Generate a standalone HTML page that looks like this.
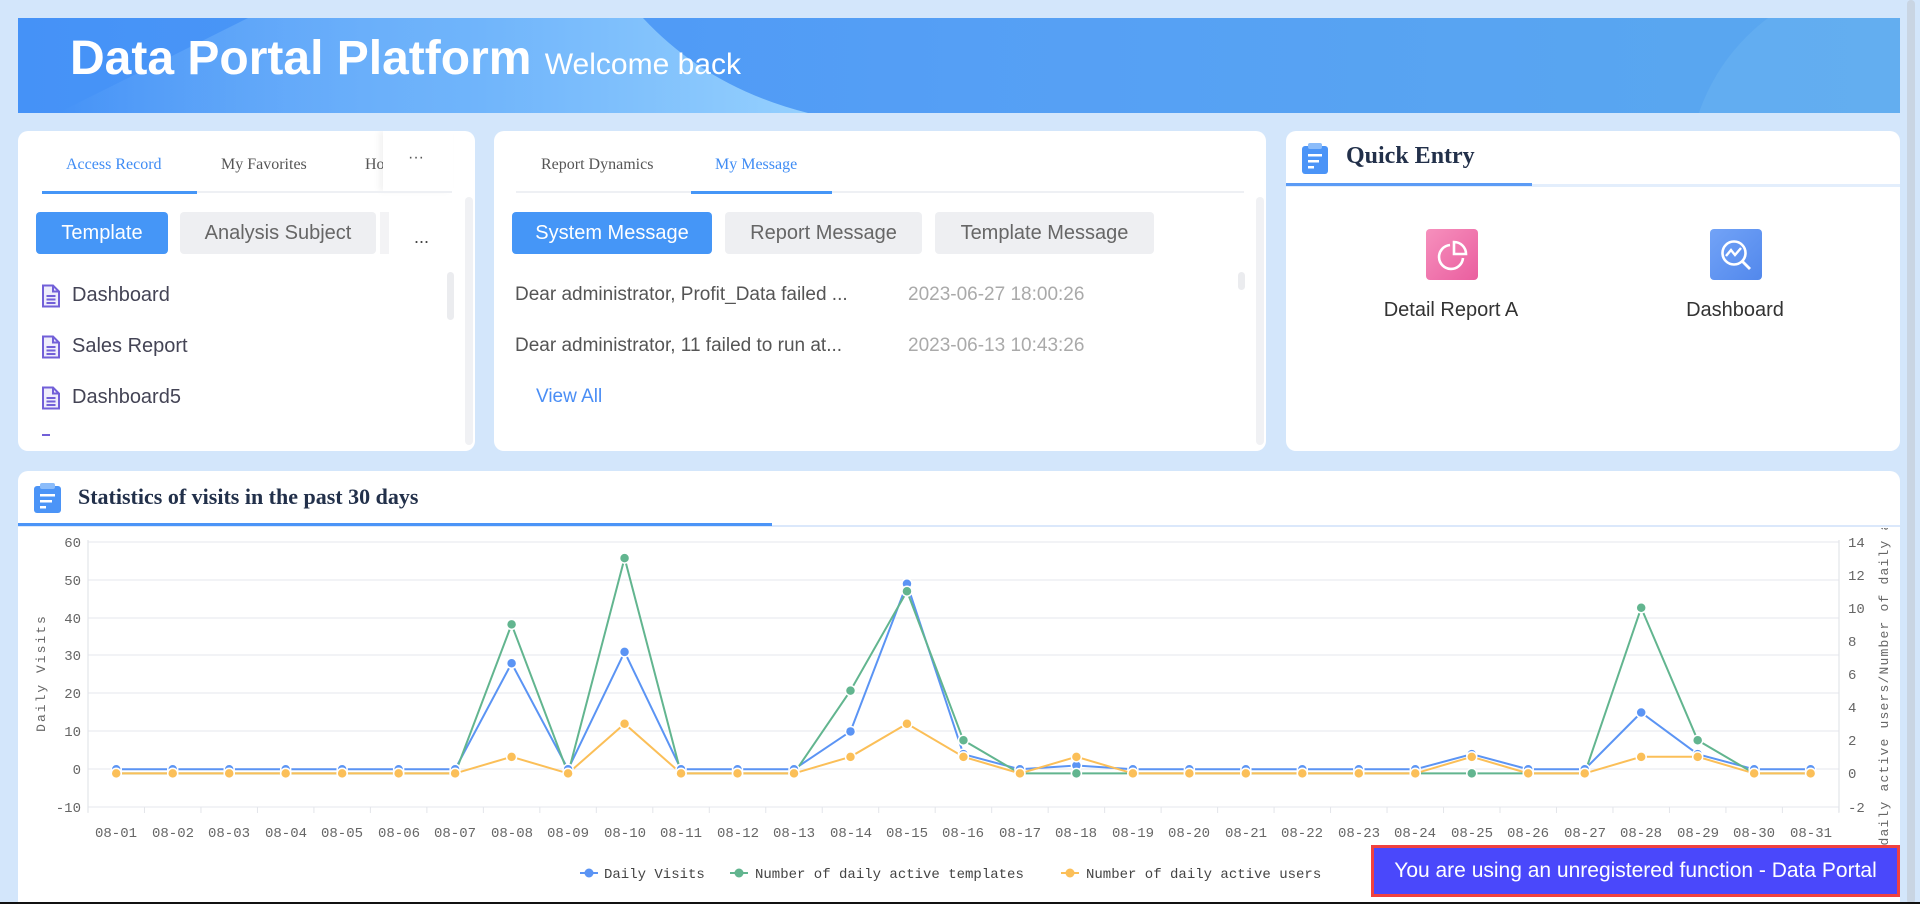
<!DOCTYPE html>
<html><head><meta charset="utf-8">
<style>
*{margin:0;padding:0;box-sizing:border-box}
html,body{width:1920px;height:904px;overflow:hidden}
body{background:#d3e6fb;position:relative;font-family:"Liberation Sans",sans-serif}
.a{position:absolute}
.card{position:absolute;background:#fff;border-radius:10px;overflow:hidden}
.serif{font-family:"Liberation Serif",serif}
.btn{position:absolute;height:42px;border-radius:4px;font-size:20px;line-height:42px;text-align:center;color:#666;background:#eeeff2}
.btn.on{background:#4596f7;color:#fff}
.li{position:absolute;left:23px;font-size:20px;color:#445;line-height:24px}
.li svg{position:absolute;left:0;top:1px}
.li span{position:absolute;left:31px;white-space:nowrap}
.msg{position:absolute;font-size:19px;color:#555;white-space:nowrap}
.dt{position:absolute;font-size:19px;color:#aaa;white-space:nowrap}
.mono{font-family:"Liberation Mono",monospace}
</style></head><body>

<div class="a" style="left:18px;top:18px;width:1882px;height:95px;overflow:hidden;background:linear-gradient(90deg,#4592f7 0%,#559ff5 50%,#5aa8ef 100%)">
<svg width="1882" height="95" style="position:absolute;left:0;top:0">
<defs><linearGradient id="lg" x1="0" x2="1" y1="0" y2="0"><stop offset="0" stop-color="#9fd4ff" stop-opacity="0"/><stop offset="0.55" stop-color="#7ec0fd" stop-opacity="0.7"/><stop offset="1" stop-color="#95d0fe" stop-opacity="1"/></linearGradient></defs>
<path d="M230 0 L625 0 Q690 70 790 95 L40 95 Z" fill="url(#lg)"/>
<circle cx="1870" cy="160" r="200" fill="#6cb3f2" opacity="0.5"/>
</svg>
<div class="a" style="left:52px;top:13px;color:#fff;font-weight:bold;font-size:48px;white-space:nowrap">Data Portal Platform <span style="font-weight:normal;font-size:30px">Welcome back</span></div>
</div>

<div class="a" style="left:1907px;top:0;width:8px;height:904px;background:#c9d5e3;border-radius:4px"></div>

<div class="card" style="left:18px;top:131px;width:457px;height:320px">
<div class="a serif" style="left:48px;top:25px;font-size:16px;color:#3f8cf4">Access Record</div>
<div class="a serif" style="left:203px;top:25px;font-size:16px;color:#555">My Favorites</div>
<div class="a serif" style="left:347px;top:25px;font-size:16px;color:#555">Ho</div>
<div class="a" style="left:365px;top:0;width:70px;height:60px;background:#fff;box-shadow:-4px 0 6px rgba(0,0,0,0.05)"></div>
<div class="a" style="left:390px;top:18px;font-size:16px;color:#555">···</div>
<div class="a" style="left:24px;top:60px;width:410px;height:2px;background:#eef0f4"></div>
<div class="a" style="left:24px;top:60px;width:155px;height:3px;background:#4596f7"></div>
<div class="btn on" style="left:18px;top:81px;width:132px">Template</div>
<div class="btn" style="left:162px;top:81px;width:196px">Analysis Subject</div>
<div class="a" style="left:362px;top:81px;width:9px;height:42px;background:#f3f3f5"></div>
<div class="a" style="left:396px;top:96px;font-size:18px;color:#444">...</div>
<div class="a" style="left:447px;top:66px;width:8px;height:248px;background:#f0f1f4;border-radius:4px"></div>
<div class="a" style="left:429px;top:141px;width:7px;height:48px;background:#ebecef;border-radius:4px"></div>
<div class="li" style="top:152px"><svg width="20" height="24" viewBox="0 0 20 24"><path d="M2 1.5h10l6 6v15H2z" fill="#efedfb" stroke="#7260d8" stroke-width="2"/><path d="M12 1.5v6h6M5.5 12h9M5.5 15.5h9M5.5 19h9" stroke="#7260d8" stroke-width="2" fill="none"/></svg><span>Dashboard</span></div>
<div class="li" style="top:203px"><svg width="20" height="24" viewBox="0 0 20 24"><path d="M2 1.5h10l6 6v15H2z" fill="#efedfb" stroke="#7260d8" stroke-width="2"/><path d="M12 1.5v6h6M5.5 12h9M5.5 15.5h9M5.5 19h9" stroke="#7260d8" stroke-width="2" fill="none"/></svg><span>Sales Report</span></div>
<div class="li" style="top:254px"><svg width="20" height="24" viewBox="0 0 20 24"><path d="M2 1.5h10l6 6v15H2z" fill="#efedfb" stroke="#7260d8" stroke-width="2"/><path d="M12 1.5v6h6M5.5 12h9M5.5 15.5h9M5.5 19h9" stroke="#7260d8" stroke-width="2" fill="none"/></svg><span>Dashboard5</span></div>
<div class="a" style="left:24px;top:303px;width:8px;height:2px;background:#7260d8"></div>
</div>

<div class="card" style="left:494px;top:131px;width:772px;height:320px">
<div class="a serif" style="left:47px;top:25px;font-size:16px;color:#555">Report Dynamics</div>
<div class="a serif" style="left:221px;top:25px;font-size:16px;color:#3f8cf4">My Message</div>
<div class="a" style="left:22px;top:60px;width:728px;height:2px;background:#eef0f4"></div>
<div class="a" style="left:197px;top:60px;width:141px;height:3px;background:#4596f7"></div>
<div class="btn on" style="left:18px;top:81px;width:200px">System Message</div>
<div class="btn" style="left:231px;top:81px;width:197px">Report Message</div>
<div class="btn" style="left:441px;top:81px;width:219px">Template Message</div>
<div class="msg" style="left:21px;top:153px">Dear administrator, Profit_Data failed ...</div>
<div class="dt" style="left:414px;top:153px">2023-06-27 18:00:26</div>
<div class="msg" style="left:21px;top:204px">Dear administrator, 11 failed to run at...</div>
<div class="dt" style="left:414px;top:204px">2023-06-13 10:43:26</div>
<div class="a" style="left:42px;top:255px;font-size:19px;color:#4a8ef5">View All</div>
<div class="a" style="left:762px;top:66px;width:8px;height:248px;background:#f0f1f4;border-radius:4px"></div>
<div class="a" style="left:744px;top:141px;width:7px;height:18px;background:#ebecef;border-radius:4px"></div>
</div>

<div class="card" style="left:1286px;top:131px;width:614px;height:320px">
<svg class="a" style="left:16px;top:12px" width="26" height="31" viewBox="0 0 26 31"><rect x="0" y="3" width="26" height="28" rx="3" fill="#4b94f7"/><rect x="6" y="0" width="14" height="6" rx="2" fill="#8bbcfa"/><rect x="6" y="11" width="14" height="2.5" fill="#fff"/><rect x="6" y="17" width="11" height="2.5" fill="#fff"/><rect x="6" y="23" width="6" height="2.5" fill="#fff"/></svg>
<div class="a serif" style="left:60px;top:12px;font-size:24px;font-weight:bold;color:#22304a">Quick Entry</div>
<div class="a" style="left:0;top:53px;width:614px;height:3px;background:#e3eefc"></div>
<div class="a" style="left:0;top:52px;width:246px;height:3px;background:#5b9bf5"></div>
<div class="a" style="left:140px;top:98px;width:52px;height:51px;border-radius:4px;background:linear-gradient(135deg,#f690bd,#ea5e9f)"></div>
<svg class="a" style="left:140px;top:98px" width="52" height="51" viewBox="0 0 52 51"><path d="M24 16 A12 12 0 1 0 37 29" fill="none" stroke="#fff" stroke-width="2.6"/><path d="M28 13 A12 12 0 0 1 40 25 H28 Z" fill="none" stroke="#fff" stroke-width="2.6"/></svg>
<div class="a" style="left:424px;top:98px;width:52px;height:51px;border-radius:4px;background:linear-gradient(135deg,#72a3f7,#5288ec)"></div>
<svg class="a" style="left:424px;top:98px" width="52" height="51" viewBox="0 0 52 51"><circle cx="24" cy="24" r="11.5" fill="none" stroke="#fff" stroke-width="2.6"/><path d="M32.5 32.5 L40 40" stroke="#fff" stroke-width="2.8"/><path d="M16 27 L21 21 L25 26 L31 19" fill="none" stroke="#fff" stroke-width="2.4"/></svg>
<div class="a" style="left:65px;top:168px;width:200px;text-align:center;font-size:20px;color:#333">Detail Report A</div>
<div class="a" style="left:349px;top:168px;width:200px;text-align:center;font-size:20px;color:#333">Dashboard</div>
</div>

<div class="card" style="left:18px;top:471px;width:1882px;height:431px;border-bottom-left-radius:0;border-bottom-right-radius:0">
<svg class="a" style="left:16px;top:12px" width="27" height="30" viewBox="0 0 27 30"><rect x="0" y="3" width="27" height="27" rx="3" fill="#4b94f7"/><rect x="6" y="0" width="15" height="6" rx="2" fill="#8bbcfa"/><rect x="6" y="11" width="15" height="2.5" fill="#fff"/><rect x="6" y="17" width="12" height="2.5" fill="#fff"/><rect x="6" y="23" width="6" height="2.5" fill="#fff"/></svg>
<div class="a serif" style="left:60px;top:13px;font-size:22px;font-weight:bold;color:#22304a;white-space:nowrap">Statistics of visits in the past 30 days</div>
<div class="a" style="left:0;top:54px;width:1882px;height:2px;background:#dbe8fb"></div>
<div class="a" style="left:0;top:52px;width:754px;height:3px;background:#4b94f7"></div>
</div>

<svg class="a" style="left:0;top:0" width="1920" height="904" id="ch">
<defs><clipPath id="rc"><rect x="1860" y="528" width="60" height="320"/></clipPath></defs>
<g stroke="#eeeff3" stroke-width="1.5">
<line x1="88" x2="1839" y1="542" y2="542"/><line x1="88" x2="1839" y1="580" y2="580"/><line x1="88" x2="1839" y1="618" y2="618"/><line x1="88" x2="1839" y1="655" y2="655"/><line x1="88" x2="1839" y1="693" y2="693"/><line x1="88" x2="1839" y1="731" y2="731"/><line x1="88" x2="1839" y1="769" y2="769"/><line x1="88" x2="1839" y1="807" y2="807"/>
</g>
<g stroke="#e3e5ea" stroke-width="1.2">
<line x1="88" x2="88" y1="540" y2="812"/><line x1="1839" x2="1839" y1="540" y2="812"/>
</g>
<g id="ticks" stroke="#e3e5ea" stroke-width="1"></g>
<g class="mono" font-size="14" fill="#666" text-anchor="end">
<text x="81" y="547">60</text><text x="81" y="585">50</text><text x="81" y="623">40</text><text x="81" y="660">30</text><text x="81" y="698">20</text><text x="81" y="736">10</text><text x="81" y="774">0</text><text x="81" y="812">-10</text>
</g>
<g class="mono" font-size="14" fill="#666">
<text x="1848" y="547">14</text><text x="1848" y="580">12</text><text x="1848" y="613">10</text><text x="1848" y="646">8</text><text x="1848" y="679">6</text><text x="1848" y="712">4</text><text x="1848" y="745">2</text><text x="1848" y="778">0</text><text x="1848" y="812">-2</text>
</g>
<text class="mono" font-size="13" fill="#666" letter-spacing="2" text-anchor="middle" transform="translate(45,673) rotate(-90)">Daily Visits</text>
<g clip-path="url(#rc)"><text class="mono" font-size="13" fill="#666" letter-spacing="1.2" text-anchor="middle" transform="translate(1888,661) rotate(-90)">Number of daily active users/Number of daily active templates</text></g>
<g class="mono" font-size="14" fill="#666" text-anchor="middle">
<text x="116" y="837">08-01</text><text x="173" y="837">08-02</text><text x="229" y="837">08-03</text><text x="286" y="837">08-04</text><text x="342" y="837">08-05</text><text x="399" y="837">08-06</text><text x="455" y="837">08-07</text><text x="512" y="837">08-08</text><text x="568" y="837">08-09</text><text x="625" y="837">08-10</text><text x="681" y="837">08-11</text><text x="738" y="837">08-12</text><text x="794" y="837">08-13</text><text x="851" y="837">08-14</text><text x="907" y="837">08-15</text><text x="963" y="837">08-16</text><text x="1020" y="837">08-17</text><text x="1076" y="837">08-18</text><text x="1133" y="837">08-19</text><text x="1189" y="837">08-20</text><text x="1246" y="837">08-21</text><text x="1302" y="837">08-22</text><text x="1359" y="837">08-23</text><text x="1415" y="837">08-24</text><text x="1472" y="837">08-25</text><text x="1528" y="837">08-26</text><text x="1585" y="837">08-27</text><text x="1641" y="837">08-28</text><text x="1698" y="837">08-29</text><text x="1754" y="837">08-30</text><text x="1811" y="837">08-31</text>
</g>
<g id="series"></g>
<g class="mono" font-size="14" fill="#444">
<line x1="580" x2="598" y1="873" y2="873" stroke="#5b94f4" stroke-width="2"/><circle cx="589" cy="873" r="4.5" fill="#5b94f4"/><text x="604" y="878">Daily Visits</text>
<line x1="730" x2="748" y1="873" y2="873" stroke="#62b58f" stroke-width="2"/><circle cx="739" cy="873" r="4.5" fill="#62b58f"/><text x="755" y="878">Number of daily active templates</text>
<line x1="1061" x2="1079" y1="873" y2="873" stroke="#fbbf58" stroke-width="2"/><circle cx="1070" cy="873" r="4.5" fill="#fbbf58"/><text x="1086" y="878">Number of daily active users</text>
</g>
</svg>

<div class="a" style="left:0;top:902px;width:1920px;height:2px;background:#111"></div>

<div class="a" style="left:1371px;top:845px;width:529px;height:52px;background:#4a48fb;border:3px solid #f0413f;color:#fff;font-size:21px;line-height:46px;text-align:center;white-space:nowrap">You are using an unregistered function - Data Portal</div>

<script>
(function(){
var ns="http://www.w3.org/2000/svg";
var X=function(i){return 116.24+56.48*i;};
var L=function(v){return 769.3-v*3.786;};
var R=function(v){return 773.4-v*16.56;};
var t=document.getElementById('ticks');
for(var i=0;i<=31;i++){var l=document.createElementNS(ns,'line');var x=88+56.48*i;l.setAttribute('x1',x);l.setAttribute('x2',x);l.setAttribute('y1',807);l.setAttribute('y2',813);t.appendChild(l);}
var blue=[0,0,0,0,0,0,0,28,0,31,0,0,0,10,49,4,0,1,0,0,0,0,0,0,4,0,0,15,4,0,0];
var green=[0,0,0,0,0,0,0,9,0,13,0,0,0,5,11,2,0,0,0,0,0,0,0,0,0,0,0,10,2,0,0];
var orange=[0,0,0,0,0,0,0,1,0,3,0,0,0,1,3,1,0,1,0,0,0,0,0,0,1,0,0,1,1,0,0];
var g=document.getElementById('series');
function draw(d,f,c){var p=d.map(function(v,i){return X(i).toFixed(1)+','+f(v).toFixed(1);}).join(' ');
var pl=document.createElementNS(ns,'polyline');pl.setAttribute('points',p);pl.setAttribute('fill','none');pl.setAttribute('stroke',c);pl.setAttribute('stroke-width','2');g.appendChild(pl);}
function dots(d,f,c){d.forEach(function(v,i){var ci=document.createElementNS(ns,'circle');ci.setAttribute('cx',X(i));ci.setAttribute('cy',f(v));ci.setAttribute('r','5');ci.setAttribute('fill',c);ci.setAttribute('stroke','#fff');ci.setAttribute('stroke-width','1.5');g.appendChild(ci);});}
draw(blue,L,'#5b94f4');draw(green,R,'#62b58f');draw(orange,R,'#fbbf58');
dots(blue,L,'#5b94f4');dots(green,R,'#62b58f');dots(orange,R,'#fbbf58');
})();
</script>
</body></html>
